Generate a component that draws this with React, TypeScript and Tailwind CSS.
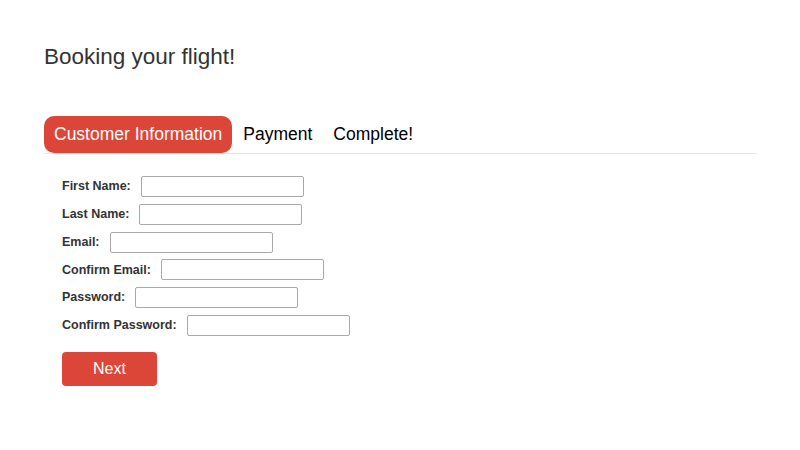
import React from 'react';

const fields = ['First Name:', 'Last Name:', 'Email:', 'Confirm Email:', 'Password:', 'Confirm Password:'];

const App: React.FC = () => {
  return (
    <div className="min-h-screen bg-white px-[44px] pt-[42px] text-[#333] font-['Liberation_Sans',Arial,sans-serif]">
      <h1 className="text-[22.5px] leading-[30px]">Booking your flight!</h1>

      <nav className="mt-[44px] flex items-center gap-[1px] border-b border-[#e5e5e5] w-[713px]">
        <span className="h-[37px] flex items-center px-[10px] rounded-[10px] bg-[#dc4638] text-white text-[17.5px]">
          Customer Information
        </span>
        <span className="h-[37px] flex items-center px-[10px] text-[17.5px] text-black">Payment</span>
        <span className="h-[37px] flex items-center px-[10px] text-[17.5px] text-black">Complete!</span>
      </nav>

      <form className="pl-[18px] pt-[22px] flex flex-col gap-[6.8px]">
        {fields.map((f) => (
          <div key={f} className="flex items-center h-[21px]">
            <label className="text-[12.5px] font-bold mr-[10px]">{f}</label>
            <input
              type="text"
              className="w-[163px] h-[21px] border border-[#a9a9a9] rounded-[2px] bg-white"
            />
          </div>
        ))}
        <button
          type="button"
          className="mt-[9px] w-[95px] h-[34px] rounded-[4px] bg-[#dc4638] text-white text-[16px]"
        >
          Next
        </button>
      </form>
    </div>
  );
};

export default App;
